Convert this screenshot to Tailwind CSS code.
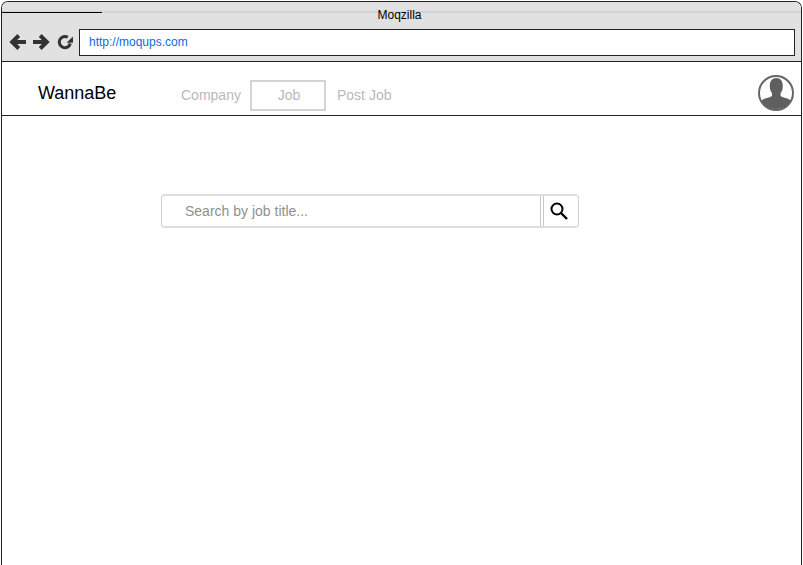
<!DOCTYPE html>
<html lang="en">
<head>
  <meta charset="UTF-8" />
  <title>Moqzilla</title>
  <script src="https://cdn.jsdelivr.net/npm/@tailwindcss/browser@4"></script>
</head>
<body class="bg-white overflow-hidden font-['Liberation_Sans',Arial,sans-serif]">
  <div class="h-[565px] pt-px pl-px">
    <div class="w-[801px] h-[564px] border-x border-t border-[#222] rounded-t-[7px] overflow-hidden flex flex-col">

      <!-- browser chrome -->
      <div class="h-[60px] bg-[#e1e1e1] shrink-0 flex flex-col border-b border-[#222]">
        <div class="h-[27px] relative flex justify-center">
          <div class="absolute left-0 right-0 top-[9px] h-[2px] bg-[#d2d2d2]"></div>
          <div class="absolute left-0 w-[100px] top-[10px] h-px bg-black"></div>
          <span class="relative text-[12px] leading-[14px] pt-[6px] text-black -ml-[4px]">Moqzilla</span>
        </div>
        <div class="flex items-center pl-[7px] pr-[6px] h-[27px]">
          <svg class="w-[17px] h-[16px] mr-[7px] -mt-[2px]" viewBox="0 0 17 16" fill="none" stroke="#333" stroke-width="4"><path d="M17 8H4M9.800 1.500L3.200 8l6.600 6.500"/></svg>
          <svg class="w-[17px] h-[16px] mr-[7px] -mt-[2px]" viewBox="0 0 17 16" fill="none" stroke="#333" stroke-width="4"><path d="M0 8H13M7.200 1.500L13.800 8l-6.600 6.500"/></svg>
          <svg class="w-[16px] h-[16px] mr-[6px] -mt-[2px]" viewBox="0 0 16 16" fill="none"><path d="M13.300 9.500A5.600 5.600 0 1 1 10.800 3.300" stroke="#333" stroke-width="3"/><path d="M16 2.500V8.800H9.500z" fill="#333"/></svg>
          <div class="flex-1 h-[27px] bg-white border border-[#222] flex items-center pl-[9px] pb-[2px] text-[12px] text-[#0a6be0]">http://moqups.com</div>
        </div>
      </div>

      <!-- nav -->
      <div class="h-[54px] shrink-0 border-b border-[#222] flex items-center pl-[36px] pr-[7px] bg-white">
        <span class="text-[18px] text-black w-[143px] mt-[9px]">WannaBe</span>
        <div class="flex items-center text-[14px] text-[#b9b9b9] mt-[14px]">
          <span class="w-[69px]">Company</span>
          <span class="w-[76px] h-[31px] border-2 border-[#d4d4d4] flex items-center justify-center pl-[2px]">Job</span>
          <span class="ml-[11px]">Post Job</span>
        </div>
        <svg class="ml-auto w-[36px] h-[36px] mt-[9px]" viewBox="0 0 36 36">
          <circle cx="18" cy="18" r="17" fill="#fff" stroke="#666" stroke-width="2"/>
          <path d="M3.500 25.500c2.500-2.500 7.500-2.500 10.500-4.500v-3c-1.500-1.500-2.200-4-2.200-7.500 0-4.500 2.500-7.500 6.500-7.500s6.500 3 6.500 7.500c0 3.500-.7 6-2.200 7.500v3c3 2 7.700 2 10.100 4.500A16 16 0 0 1 18 34 16 16 0 0 1 3.500 25.500z" fill="#5f5f5f"/>
        </svg>
      </div>

      <!-- search -->
      <div class="flex-1 bg-white pt-[78px] pl-[159px]">
        <div class="w-[418px] h-[34px] flex border border-[#d0d0d0] border-y-2 border-y-[#dedede] rounded-[4px]">
          <div class="w-[378px] flex items-center pl-[23px] text-[14px] text-[#8f8f8f]">Search by job title...</div>
          <div class="w-[4px] border-x border-[#c8c8c8]"></div>
          <div class="flex-1 flex items-center justify-center pr-[3px]">
            <svg class="w-[20px] h-[20px]" viewBox="0 0 20 20" fill="none" stroke="#000" stroke-width="2"><circle cx="7" cy="8" r="5.500"/><path d="M11 12l6 6" stroke-width="2.400"/></svg>
          </div>
        </div>
      </div>
    </div>
  </div>
</body>
</html>
